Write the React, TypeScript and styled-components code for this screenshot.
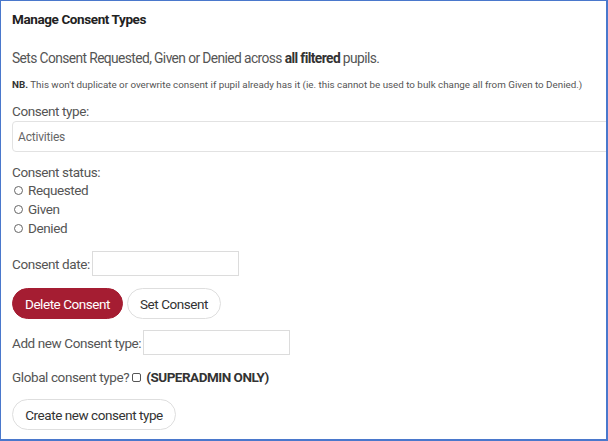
import React from "react";
import styled, { createGlobalStyle } from "styled-components";

const Global = createGlobalStyle`
  html, body { margin: 0; padding: 0; background: #fff; }
  body { font-family: Roboto, "Liberation Sans", Arial, sans-serif; color: #444; }
  * { box-sizing: border-box; }
`;

const Frame = styled.div`
  width: 608px;
  height: 441px;
  border-style: solid;
  border-color: #4a78cc;
  border-width: 1px 2px 2px 1px;
  padding: 0 0 0 11px;
  overflow: hidden;
  background: #fff;
`;

const Title = styled.div`
  font-size: 13.5px;
  font-weight: 700;
  letter-spacing: -0.4px;
  color: #222;
  margin-top: 10px;
  line-height: 16px;
`;

const Lead = styled.p`
  font-size: 13.8px;
  letter-spacing: -0.6px;
  color: #555;
  margin: 22px 0 0;
  line-height: 18px;
  b { color: #333; font-weight: 700; }
`;

const Note = styled.p`
  font-size: 9.8px;
  color: #555;
  margin: 11px 0 0;
  line-height: 13px;
  b { color: #333; }
`;

const Label = styled.div<{ $mt: number }>`
  font-size: 13.5px;
  letter-spacing: -0.4px;
  color: #555;
  margin-top: ${(p) => p.$mt}px;
  line-height: 17px;
`;

const Select = styled.div`
  margin-top: 1px;
  width: 620px;
  height: 31px;
  border: 1px solid #e2e2e2;
  border-radius: 4px;
  display: flex;
  align-items: center;
  padding-left: 5px;
  font-size: 12px;
  letter-spacing: -0.2px;
  color: #666;
`;

const RadioList = styled.div`
  display: flex;
  flex-direction: column;
  gap: 1px;
`;

const RadioRow = styled.label`
  display: flex;
  align-items: center;
  gap: 5px;
  font-size: 13.5px;
  letter-spacing: -0.4px;
  color: #555;
  line-height: 18px;
`;

const Circle = styled.span`
  width: 9px;
  height: 9px;
  border: 1px solid #666;
  border-radius: 50%;
  margin-left: 2px;
`;

const FieldRow = styled.div<{ $mt: number }>`
  display: flex;
  align-items: center;
  gap: 2px;
  margin-top: ${(p) => p.$mt}px;
  font-size: 13.5px;
  letter-spacing: -0.4px;
  color: #555;
`;

const TextBox = styled.div<{ $h: number }>`
  width: 147px;
  height: ${(p) => p.$h}px;
  border: 1px solid #dcdcdc;
  background: #fff;
`;

const Buttons = styled.div<{ $mt: number }>`
  display: flex;
  gap: 4px;
  margin-top: ${(p) => p.$mt}px;
`;

const Pill = styled.button<{ $primary?: boolean; $w: number }>`
  font-family: inherit;
  height: 31px;
  width: ${(p) => p.$w}px;
  border-radius: 16px;
  font-size: 13.5px;
  letter-spacing: -0.45px;
  padding: 0;
  cursor: pointer;
  border: 1px solid ${(p) => (p.$primary ? "#a51d32" : "#dedede")};
  background: ${(p) => (p.$primary ? "#a51d32" : "#fff")};
  color: ${(p) => (p.$primary ? "#fff" : "#333")};
`;

const CheckRow = styled.div`
  display: flex;
  align-items: center;
  margin-top: 14px;
  font-size: 13.5px;
  letter-spacing: -0.4px;
  color: #555;
  line-height: 17px;
  b { color: #333; margin-left: 5px; letter-spacing: -0.5px; }
`;

const Check = styled.span`
  width: 9px;
  height: 9px;
  border: 1px solid #555;
  border-radius: 2px;
  margin-left: 3px;
`;

export default function App() {
  return (
    <>
      <Global />
      <Frame>
        <Title>Manage Consent Types</Title>
        <Lead>
          Sets Consent Requested, Given or Denied across <b>all filtered</b> pupils.
        </Lead>
        <Note>
          <b>NB.</b> This won't duplicate or overwrite consent if pupil already has it (ie. this cannot be used to bulk change all from Given to Denied.)
        </Note>
        <Label $mt={12}>Consent type:</Label>
        <Select>Activities</Select>
        <Label $mt={12}>Consent status:</Label>
        <RadioList>
          <RadioRow><Circle />Requested</RadioRow>
          <RadioRow><Circle />Given</RadioRow>
          <RadioRow><Circle />Denied</RadioRow>
        </RadioList>
        <FieldRow $mt={14}>
          Consent date:<TextBox $h={25} />
        </FieldRow>
        <Buttons $mt={12}>
          <Pill $primary $w={111}>Delete Consent</Pill>
          <Pill $w={94}>Set Consent</Pill>
        </Buttons>
        <FieldRow $mt={11}>
          Add new Consent type:<TextBox $h={25} />
        </FieldRow>
        <CheckRow>
          Global consent type?<Check /><b>(SUPERADMIN ONLY)</b>
        </CheckRow>
        <Buttons $mt={13}>
          <Pill $w={164}>Create new consent type</Pill>
        </Buttons>
      </Frame>
    </>
  );
}
